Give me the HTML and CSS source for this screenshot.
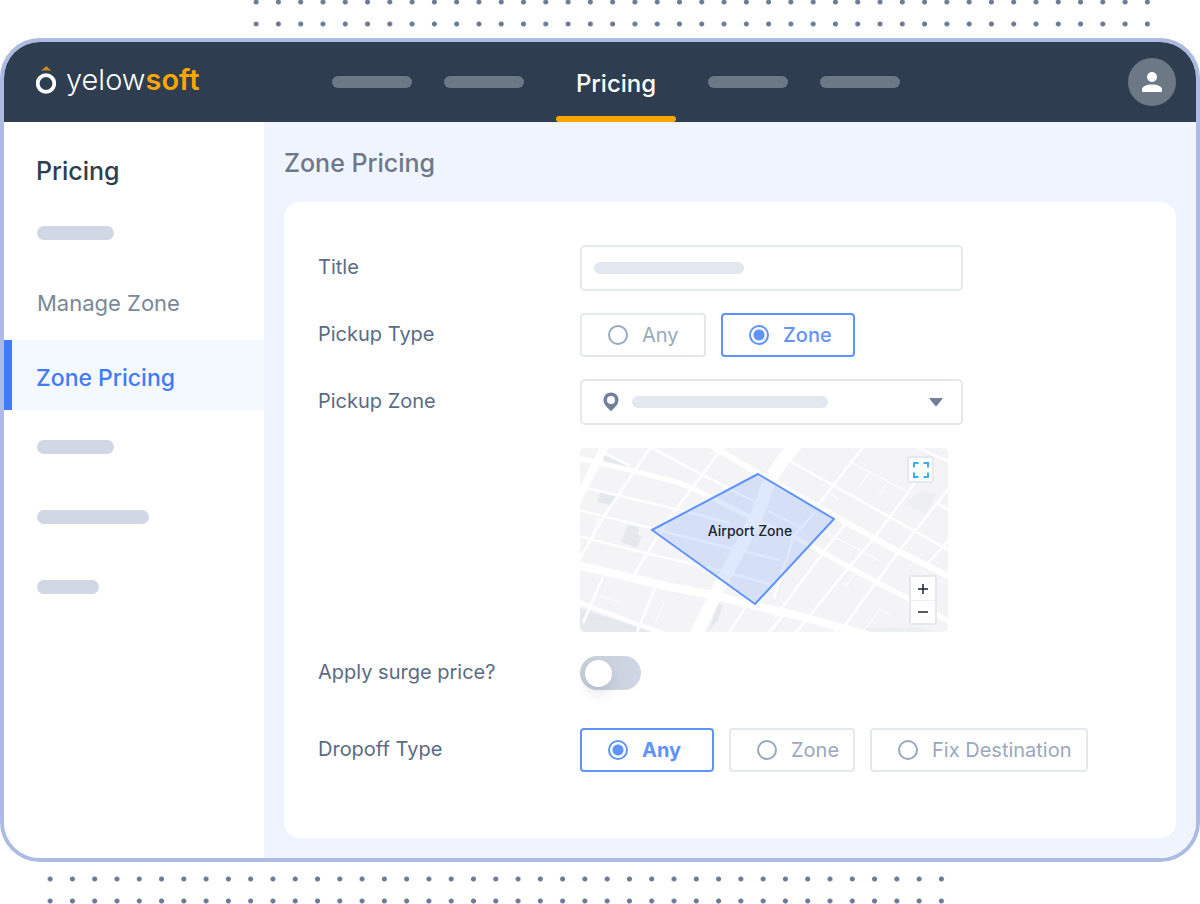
FILE: index.html
```
<!DOCTYPE html>
<html lang="en">
  <head>
    <meta charset="UTF-8" />
    <meta name="viewport" content="width=device-width, initial-scale=1.0" />
    <title>Zone Pricing</title>
    <link rel="stylesheet" href="styles.css">
  </head>
  <body>
    <div class="dots dots-top"></div>

    <div class="window">
      <header class="topbar">
        <a class="brand" href="#">
          <svg class="brand-mark" width="20" height="28" viewBox="0 0 20 28" aria-hidden="true">
            <path d="M5 5 L10.300 0 L15.500 5 Q10.300 3.500 5 5z" fill="#d48a1a" />
            <circle cx="10" cy="17.500" r="8.300" fill="none" stroke="#fff" stroke-width="3.800" />
          </svg>
          <span class="brand-name">yelow<b>soft</b></span>
        </a>
        <nav class="topnav">
          <a class="nav-bar" href="#" aria-label="Menu 1"></a>
          <a class="nav-bar" href="#" aria-label="Menu 2"></a>
          <a class="nav-active" href="#">Pricing</a>
          <a class="nav-bar" href="#" aria-label="Menu 4"></a>
          <a class="nav-bar" href="#" aria-label="Menu 5"></a>
        </nav>
        <button class="avatar" type="button" aria-label="Account">
          <svg width="20" height="20" viewBox="0 0 20 20">
            <circle cx="10" cy="5" r="5" fill="#fff" />
            <path d="M0 20v-2.500c0-3.300 5-5 10-5s10 1.700 10 5V20z" fill="#fff" />
          </svg>
        </button>
      </header>

      <div class="layout">
        <aside class="sidebar">
          <h2>Pricing</h2>
          <a class="side-item" href="#" aria-label="Item 1"><span class="bar"></span></a>
          <a class="side-item" href="#">Manage Zone</a>
          <a class="side-item active" href="#">Zone Pricing</a>
          <a class="side-item" href="#" aria-label="Item 4"><span class="bar"></span></a>
          <a class="side-item" href="#" aria-label="Item 5"><span class="bar long"></span></a>
          <a class="side-item" href="#" aria-label="Item 6"><span class="bar short"></span></a>
        </aside>

        <main class="content">
          <h1>Zone Pricing</h1>
          <form class="card">
            <div class="row">
              <label class="label" for="title">Title</label>
              <div class="field">
                <span class="fill"></span>
                <input id="title" type="text" />
              </div>
            </div>

            <div class="row" role="radiogroup" aria-labelledby="pickup-type">
              <span class="label" id="pickup-type">Pickup Type</span>
              <div class="options">
                <label class="option"><input type="radio" name="pickup" />Any</label>
                <label class="option"><input type="radio" name="pickup" checked />Zone</label>
              </div>
            </div>

            <div class="row">
              <label class="label" for="pickup-zone">Pickup Zone</label>
              <div class="field select-field">
                <svg width="16" height="20" viewBox="0 0 16 20" aria-hidden="true">
                  <path d="M8 .5C3.900.5.5 3.700.5 7.900c0 4.300 4.200 8.200 7.500 11.300 3.300-3.100 7.500-7 7.500-11.300C15.500 3.700 12.100.5 8 .5zm0 3.500a4 4 0 1 1 0 8 4 4 0 0 1 0-8z" fill="#71819b" />
                </svg>
                <span class="fill wide"></span>
                <select id="pickup-zone"><option></option></select>
                <svg width="14" height="8" viewBox="0 0 14 8" aria-hidden="true">
                  <path d="M1 0h12q1 0 .4 1L8 7.400q-1 1-2 0L.6 1Q0 0 1 0z" fill="#71819b" />
                </svg>
              </div>
            </div>

            <div class="row map-row">
              <div class="map">
                <svg class="map-view" viewBox="0 0 368 184" role="img" aria-label="Map of the airport zone">
                  <rect width="368" height="184" fill="#f4f4f6" />
                  <!-- blocks -->
                  <g fill="#e5e9ee">
                    <path d="M24 6l30 14-30-6z" />
                    <path d="M20 44l17 3-4 11-16-4z" />
                    <path d="M48 77l11 2-1 8 4 1-5 12-16-6z" />
                    <path d="M0 160l72 24H0z" />
                    <path d="M138 156l5 1-5 15-10 12z" />
                  </g>
                  <g fill="#eeeff2">
                    <path d="M334 48l8-6 14 4-10 20-21-10z" />
                    <path d="M287 180l50-1 20 5h-72z" />
                  </g>
                  <g fill="none" stroke="#fff">
                    <path stroke-width="13" d="M220-8Q190 25 185 45T146 126L114 190" />
                    <path stroke-width="8" d="M25-2L-4 55" />
                    <path stroke-width="8" d="M-3 117L90 139L133 147L177 158L223 169L290 188" />
                    <path stroke-width="6" d="M130-3L178 25L253 67L310 99L372 130" />
                    <path stroke-width="5" d="M-3 10L50 22L100 35Q112 40 140 54L180 74L230 97L270 120L327 150L372 175" />
                    <g stroke-width="2.500">
                      <path d="M72-3L23 70L-2 114M144-2L90 69L53 128" />
                      <path d="M-2 38L100 62L150 75M-2 62L67 79L157 102L200 112M-2 88L73 107L130 120L190 136" />
                      <path d="M68-2L123 27L177 55M24 5L50 18M23 129L3 175M75 140L57 184" />
                      <path d="M206 11L283 54L372 104M284-2L237 58M352 9L329 43L295 89L265 124L215 186" />
                      <path d="M374 34L319 103L265 177M265 76L242 106L195 169M372 89L347 116M334-2L372 15M355 54L372 64" />
                      <path d="M188 63L222 80M234 65L214 88L194 150M165 160L148 186M205 165L188 186M260 178L253 186" />
                    </g>
                    <path stroke-width="4" d="M-2 154L84 186" />
                    <g stroke-width="1.500" stroke="#fbfbfc">
                      <path d="M272 15L326 43M289 24L279 39M307 35L299 48M245 84L300 113M250 46l8 4-2 4" />
                      <path d="M275 124l-9 14 4 4M262 135l5 3M286 180l14-19 9 5M15 147l25 7M84 155l-9 21M21 66L12 87" />
                    </g>
                  </g>
                  <g fill="#d3d9e2">
                    <circle cx="25" cy="51" r=".6" /><circle cx="29" cy="53" r=".6" /><circle cx="31" cy="50" r=".6" />
                    <circle cx="52" cy="91" r=".6" /><circle cx="55" cy="94" r=".6" /><circle cx="56" cy="88" r=".6" />
                    <circle cx="11" cy="172" r=".6" /><circle cx="15" cy="175" r=".6" /><circle cx="18" cy="171" r=".6" />
                  </g>
                  <path d="M178 26L254 71L175 156L72 82z" fill="#5a8ffb" fill-opacity=".2" stroke="#5f93ff" stroke-width="2" />
                  <text class="zone-name" x="170" y="88" text-anchor="middle">Airport Zone</text>
                </svg>
                <button class="map-button expand" type="button" aria-label="Full screen">
                  <svg width="16" height="16" viewBox="0 0 16 16">
                    <path d="M1 5.500V1h4.500M10.500 1H15v4.500M15 10.500V15h-4.500M5.500 15H1v-4.500" fill="none" stroke="#3bacec" stroke-width="2" />
                  </svg>
                </button>
                <div class="map-zoom">
                  <button class="map-button" type="button" aria-label="Zoom in">
                    <svg width="12" height="12" viewBox="0 0 12 12"><path d="M1 6h10M6 1v10" stroke="#1b2430" stroke-width="1.500" /></svg>
                  </button>
                  <button class="map-button" type="button" aria-label="Zoom out">
                    <svg width="12" height="12" viewBox="0 0 12 12"><path d="M1 6h10" stroke="#1b2430" stroke-width="1.500" /></svg>
                  </button>
                </div>
              </div>
            </div>

            <div class="row surge">
              <label class="label" for="surge">Apply surge price?</label>
              <input class="switch" id="surge" type="checkbox" role="switch" />
            </div>

            <div class="row" role="radiogroup" aria-labelledby="dropoff-type">
              <span class="label" id="dropoff-type">Dropoff Type</span>
              <div class="options bold">
                <label class="option"><input type="radio" name="dropoff" checked />Any</label>
                <label class="option"><input type="radio" name="dropoff" />Zone</label>
                <label class="option"><input type="radio" name="dropoff" />Fix Destination</label>
              </div>
            </div>
          </form>
        </main>
      </div>
    </div>

    <div class="dots dots-bottom"></div>
  </body>
</html>
```
FILE: styles.css
```
* {
  box-sizing: border-box;
}
body {
  margin: 0;
  min-height: 100vh;
  display: flex;
  flex-direction: column;
  background: #fff;
  color: #5a6b86;
  font-family: Inter, "Liberation Sans", sans-serif;
  font-size: 20px;
}
a {
  color: inherit;
  text-decoration: none;
}
button {
  border: 0;
  padding: 0;
  cursor: pointer;
}

/* 41 dots in a row */
.dots {
  background-image: radial-gradient(circle, #6b7b95 2px, transparent 3px);
  background-size: calc(100% / 41) 22px;
}
.dots-top {
  height: 38px;
  margin: 0 41px 0 245px;
  background-position: 0 -9px;
  background-clip: content-box;
  padding-bottom: 10px;
}
.dots-bottom {
  height: 42px;
  margin: 0 247px 0 39px;
  background-position: 0 6px;
  padding-top: 8px;
  background-clip: content-box;
  background-origin: border-box;
}

.window {
  flex: 1;
  display: flex;
  flex-direction: column;
  border: 4px solid #acbbe3;
  border-radius: 40px;
  overflow: hidden;
}

.topbar {
  display: flex;
  align-items: center;
  height: 80px;
  padding: 0 20px 0 32px;
  background: #2e3e50;
}
.brand {
  display: flex;
  align-items: center;
  gap: 10px;
  width: 296px;
  padding-bottom: 4px;
  color: #fff;
}
.brand-name {
  font-size: 29px;
  font-weight: 300;
  line-height: 40px;
}
.brand-name b {
  color: #faa500;
  font-weight: 600;
}
.topnav {
  align-self: stretch;
  display: flex;
  align-items: center;
  gap: 32px;
}
.nav-bar {
  width: 80px;
  height: 12px;
  border-radius: 6px;
  background: #6d7886;
}
.nav-active {
  align-self: stretch;
  display: flex;
  flex-direction: column;
  align-items: center;
  width: 120px;
  padding-top: 26px;
  color: #fff;
  font-size: 24px;
  font-weight: 500;
  line-height: 32px;
}
.nav-active::after {
  content: "";
  width: 100%;
  height: 6px;
  margin-top: auto;
  border-radius: 3px;
  background: #faa500;
}
.avatar {
  display: flex;
  align-items: center;
  justify-content: center;
  width: 48px;
  height: 48px;
  margin-left: auto;
  border-radius: 50%;
  background: #6d7886;
}

.layout {
  flex: 1;
  display: flex;
}
.sidebar {
  width: 260px;
  flex: none;
  background: #fff;
}
.sidebar h2 {
  margin: 0;
  padding: 33px 0 11px 32px;
  color: #2e3e50;
  font-size: 25px;
  font-weight: 500;
  line-height: 32px;
}
.side-item {
  display: flex;
  align-items: center;
  height: 70px;
  padding-left: 33px;
  color: #7b8898;
  font-size: 22px;
}
.side-item.active {
  margin: 2px 0;
  padding: 6px 0 0 24px;
  border-left: 8px solid #407cfa;
  background: #f4f8ff;
  color: #407cfa;
  font-size: 23px;
  font-weight: 500;
}
.bar {
  width: 77px;
  height: 14px;
  border-radius: 7px;
  background: #d1d7e4;
}
.bar.long {
  width: 112px;
}
.bar.short {
  width: 62px;
}

.content {
  flex: 1;
  display: flex;
  flex-direction: column;
  padding: 25px 20px 20px;
  background: #f0f4ff;
}
.content h1 {
  margin: 0 0 23px;
  color: #6d7888;
  font-size: 25px;
  font-weight: 500;
  line-height: 32px;
}
.card {
  flex: 1;
  display: flex;
  flex-direction: column;
  gap: 22px;
  padding: 43px 34px;
  border-radius: 16px;
  background: #fff;
}
.row {
  display: grid;
  grid-template-columns: 262px 1fr;
  align-items: center;
}
.label {
  padding-bottom: 2px;
  line-height: 24px;
}
.map-row {
  padding-top: 1px;
}
.surge {
  padding: 2px 0 16px;
}

.field {
  display: flex;
  align-items: center;
  max-width: 383px;
  height: 46px;
  padding: 0 12px;
  border: 2px solid #e5e8ed;
  border-radius: 5px;
}
.field input,
.field select {
  flex: 1;
  min-width: 0;
  height: 100%;
  border: 0;
  outline: 0;
  background: none;
  appearance: none;
  font: inherit;
  color: inherit;
}
.select-field {
  padding: 0 18px 0 21px;
}
.fill {
  width: 150px;
  height: 12px;
  border-radius: 6px;
  background: #e2e7f0;
}
.fill.wide {
  width: 196px;
  margin-left: 13px;
}

.options {
  display: flex;
  gap: 15px;
}
.option {
  display: flex;
  align-items: center;
  gap: 14px;
  min-width: 126px;
  height: 44px;
  padding: 0 14px 0 26px;
  border: 2px solid #e5e8ed;
  border-radius: 4px;
  color: #9aa8bd;
  white-space: nowrap;
}
.option:has(:checked) {
  min-width: 134px;
  border-color: #5f93ff;
  color: #5f93ff;
  font-weight: 500;
}
.bold .option:has(:checked) {
  font-weight: 700;
}
.option input {
  flex: none;
  appearance: none;
  width: 20px;
  height: 20px;
  margin: 0;
  border: 2px solid #9aa8bd;
  border-radius: 50%;
}
.option input:checked {
  border-color: #5f93ff;
  background: radial-gradient(circle, #5f93ff 5px, transparent 6px);
}

.map {
  grid-column: 2;
  position: relative;
  max-width: 368px;
  border-radius: 5px;
  overflow: hidden;
}
.map-view {
  display: block;
  width: 100%;
}
.zone-name {
  fill: #1b2430;
  font-size: 14px;
  font-weight: 500;
}
.map-button {
  display: flex;
  align-items: center;
  justify-content: center;
  width: 24px;
  height: 23px;
  background: #fff;
}
.expand {
  position: absolute;
  top: 8px;
  right: 14px;
  width: 27px;
  height: 27px;
  border: 2px solid #e5e8ed;
  border-radius: 3px;
}
.map-zoom {
  position: absolute;
  right: 11px;
  bottom: 7px;
  border: 2px solid #e5e8ed;
  border-radius: 3px;
}
.map-button + .map-button {
  border-top: 1px solid #eef0f3;
}

.switch {
  appearance: none;
  display: flex;
  align-items: center;
  width: 61px;
  height: 34px;
  margin: 0;
  padding-left: 5px;
  border-radius: 17px;
  background: linear-gradient(90deg, #c6cdd9, #d0d6e5);
}
.switch::before {
  content: "";
  width: 27px;
  height: 27px;
  border-radius: 50%;
  background: #fff;
  box-shadow: 0 8px 12px rgba(60, 70, 90, 0.12);
}
.switch:checked::before {
  margin-left: 24px;
}
```
